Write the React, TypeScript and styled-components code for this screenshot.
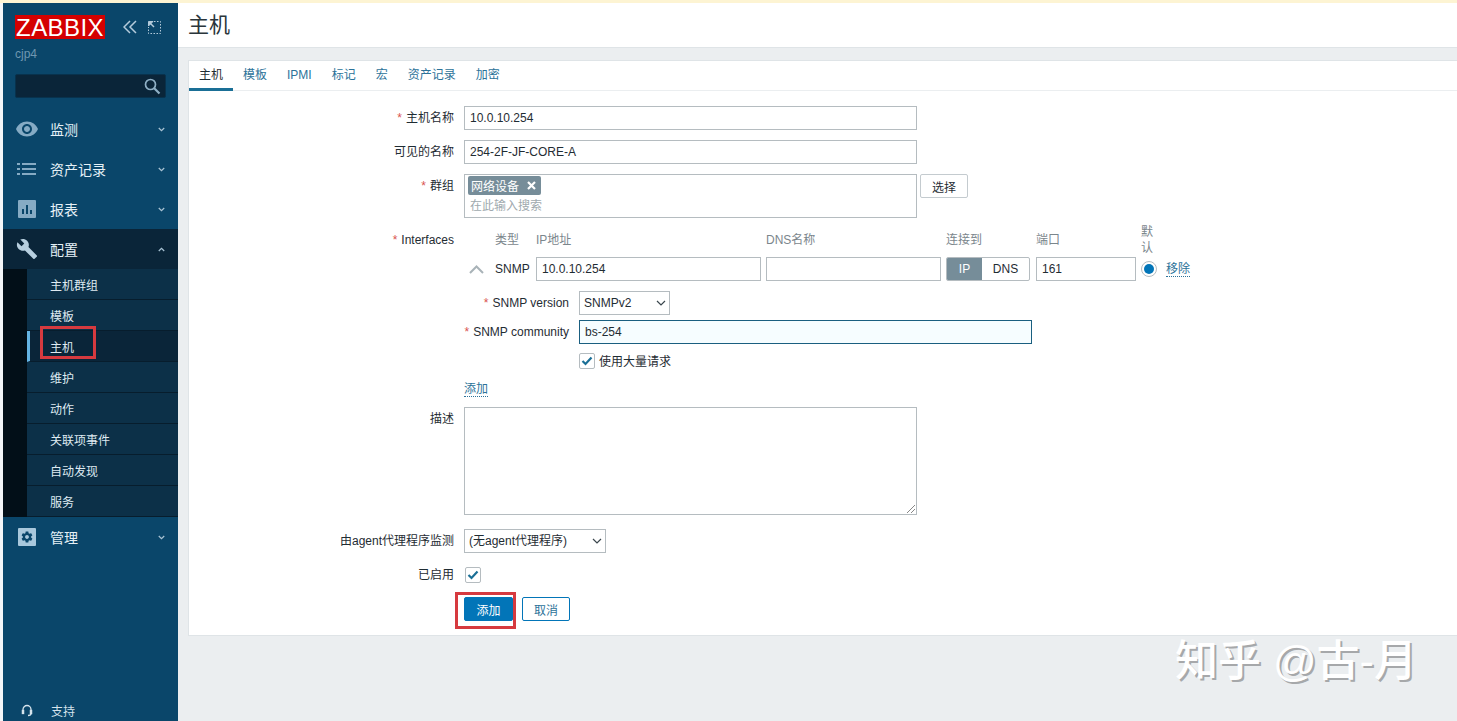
import React from 'react';
import styled, { createGlobalStyle } from 'styled-components';

const Global = createGlobalStyle`
  html, body { margin: 0; padding: 0; background: #ebeef0; }
  body { font-family: "Liberation Sans", "Noto Sans CJK SC", sans-serif; font-size: 12px; color: #1f2c33; }
  * { box-sizing: border-box; }
`;

const Page = styled.div`
  position: relative;
  width: 1457px;
  height: 721px;
  overflow: hidden;
  display: flex;
  flex-direction: column;
  background: #ebeef0;
`;
const TopStrip = styled.div`
  height: 3px;
  flex: none;
  background: #fdf4d3;
`;
const Body = styled.div`
  flex: 1;
  display: flex;
  min-height: 0;
  border-left: 3px solid #f4f6f8;
`;
const Sidebar = styled.aside`
  width: 175px;
  flex: none;
  background: #0a466a;
  display: flex;
  flex-direction: column;
`;
const Brand = styled.div`
  display: flex;
  align-items: center;
  padding: 12px 0 0 12px;
  height: 36px;
`;
const Logo = styled.div`
  width: 90px;
  height: 24px;
  background: #d40000;
  color: #fff;
  font-size: 24px;
  line-height: 25px;
  letter-spacing: 0.4px;
  text-align: center;
  white-space: nowrap;
`;
const BrandIcons = styled.div`
  display: flex;
  align-items: center;
  gap: 11px;
  margin-left: 18px;
  color: #b4cbdb;
`;
const User = styled.div`
  color: #6f97b1;
  font-size: 12px;
  line-height: 14px;
  padding: 8px 0 0 12px;
`;
const SearchBox = styled.div`
  margin: 13px 12px 0;
  height: 24px;
  background: #0a2539;
  border: 1px solid #08324d;
  border-radius: 2px;
  display: flex;
  align-items: center;
  justify-content: flex-end;
  padding-right: 4px;
  color: #8fb0c6;
`;
const Menu = styled.nav`
  margin-top: 11px;
  display: flex;
  flex-direction: column;
`;
const MenuItem = styled.div<{ $open?: boolean }>`
  height: 40px;
  display: flex;
  align-items: center;
  background: ${p => (p.$open ? '#0a2539' : 'transparent')};
  color: #e6f1f7;
  font-size: 14px;
  padding: 0 13px 0 12px;
`;
const MenuIcon = styled.span`
  width: 24px;
  height: 24px;
  display: flex;
  align-items: center;
  justify-content: center;
  color: #86abc4;
  margin-right: 11px;
`;
const MenuLabel = styled.span`
  flex: 1;
`;
const Caret = styled.span`
  display: flex;
  color: #a9c3d4;
`;
const SubMenu = styled.div`
  background: #020f18;
  padding-left: 24px;
`;
const SubItem = styled.div<{ $active?: boolean }>`
  height: 31px;
  display: flex;
  align-items: center;
  color: #dfeaf1;
  font-size: 12px;
  padding-left: ${p => (p.$active ? '20px' : '23px')};
  background: ${p => (p.$active ? '#0a2539' : '#0c3048')};
  border-bottom: 1px solid #071d2d;
  border-left: ${p => (p.$active ? '3px solid #64b4e4' : 'none')};
`;
const SidebarFooter = styled.div`
  margin-top: auto;
  height: 22px;
  display: flex;
  align-items: center;
  padding-left: 12px;
  color: #d5e3ec;
  font-size: 12px;
`;
const FooterIcon = styled.span`
  width: 24px;
  display: flex;
  justify-content: center;
  margin-right: 12px;
  color: #d5e3ec;
`;
const Main = styled.main`
  flex: 1;
  min-width: 0;
  display: flex;
  flex-direction: column;
`;
const Header = styled.header`
  height: 45px;
  flex: none;
  background: #fff;
  border-bottom: 1px solid #dfe4e7;
  padding-left: 10px;
  font-size: 21px;
  line-height: 44px;
  color: #2a353b;
`;
const Card = styled.section`
  margin: 12px 0 0 10px;
  height: 576px;
  background: #fff;
  border: 1px solid #dfe4e7;
  border-right: none;
`;
const Tabs = styled.div`
  display: flex;
  height: 30px;
  border-bottom: 1px solid #ebeef0;
`;
const Tab = styled.div<{ $active?: boolean }>`
  padding: 0 10px;
  height: 30px;
  line-height: 29px;
  color: ${p => (p.$active ? '#1f2c33' : '#2c7299')};
  border-bottom: 3px solid ${p => (p.$active ? '#1a6f96' : 'transparent')};
`;
const Form = styled.form`
  padding-top: 15px;
  display: grid;
  grid-template-columns: 265px 1fr;
  column-gap: 10px;
  row-gap: 10px;
  align-items: start;
`;
const Label = styled.label`
  text-align: right;
  line-height: 24px;
  color: #1f2c33;
  white-space: nowrap;
`;
const Star = styled.span`
  color: #d9534f;
  margin-right: 4px;
`;
const Field = styled.div<{ $w: number; $focus?: boolean }>`
  width: ${p => p.$w}px;
  height: 24px;
  line-height: 22px;
  padding: 0 5px;
  background: ${p => (p.$focus ? '#f6fdff' : '#fff')};
  border: 1px solid ${p => (p.$focus ? '#1a5f80' : '#b5bcc0')};
  color: #1f2c33;
  white-space: nowrap;
  flex: none;
`;
const Select = styled(Field)`
  display: flex;
  align-items: center;
  justify-content: space-between;
  padding: 0 3px 0 4px;
`;
const GroupLine = styled.div`
  display: flex;
  align-items: flex-start;
  gap: 3px;
`;
const GroupBox = styled.div`
  width: 453px;
  height: 44px;
  border: 1px solid #b5bcc0;
  padding: 1px 3px;
`;
const Tag = styled.span`
  display: flex;
  width: fit-content;
  align-items: center;
  gap: 8px;
  height: 19px;
  padding: 0 5px 0 3px;
  border-radius: 2px;
  background: #768d99;
  color: #fff;
`;
const Placeholder = styled.div`
  color: #a0a9ae;
  padding-left: 2px;
  line-height: 23px;
`;
const Btn = styled.button<{ $primary?: boolean; $outline?: boolean; $w: number }>`
  width: ${p => p.$w}px;
  height: 24px;
  padding: 0;
  font: inherit;
  border-radius: 2px;
  border: 1px solid ${p => (p.$primary ? '#0275b8' : p.$outline ? '#0275b8' : '#c4cbcf')};
  background: ${p => (p.$primary ? '#0275b8' : '#fff')};
  color: ${p => (p.$primary ? '#fff' : p.$outline ? '#2c7299' : '#1f2c33')};
`;
const IfaceCol = styled.div`
  display: flex;
  flex-direction: column;
  margin-top: -5px;
`;
const IfaceGrid = styled.div`
  display: grid;
  grid-template-columns: 31px 41px 230px 180px 90px 105px 25px auto;
  grid-template-rows: 34px 24px;
  align-items: center;
  justify-content: start;
`;
const HeadCell = styled.div`
  color: #7b868c;
  line-height: 16px;
`;
const NarrowHead = styled(HeadCell)`
  width: 14px;
`;
const Arrow = styled.span`
  display: flex;
  justify-content: center;
  padding-right: 7px;
  color: #a9b3b8;
`;
const Toggle = styled.div`
  width: 84px;
  height: 24px;
  display: flex;
  border: 1px solid #b5bcc0;
  border-radius: 2px;
  overflow: hidden;
`;
const ToggleOn = styled.span`
  width: 35px;
  background: #768d99;
  color: #fff;
  text-align: center;
  line-height: 22px;
`;
const ToggleOff = styled.span`
  flex: 1;
  text-align: center;
  line-height: 22px;
`;
const Radio = styled.span`
  width: 16px;
  height: 16px;
  border-radius: 50%;
  border: 1px solid #b5bcc0;
  display: flex;
  align-items: center;
  justify-content: center;
  &::after {
    content: '';
    width: 10px;
    height: 10px;
    border-radius: 50%;
    background: #0275b8;
  }
`;
const DottedLink = styled.a`
  color: #2c7299;
  border-bottom: 1px dotted #2c7299;
  line-height: 14px;
  width: fit-content;
`;
const SnmpGrid = styled.div`
  display: grid;
  grid-template-columns: 105px auto;
  column-gap: 10px;
  row-gap: 5px;
  margin-top: 10px;
  align-items: center;
  justify-content: start;
`;
const CheckRow = styled.div`
  display: flex;
  align-items: center;
  gap: 4px;
  margin-top: 3px;
`;
const Check = styled.span`
  width: 16px;
  height: 16px;
  border: 1px solid #b5bcc0;
  border-radius: 2px;
  display: flex;
  align-items: center;
  justify-content: center;
  color: #1a6f96;
  flex: none;
`;
const AddLink = styled(DottedLink)`
  margin-top: 13px;
`;
const TextArea = styled.div`
  width: 453px;
  height: 108px;
  margin-bottom: 4px;
  border: 1px solid #b5bcc0;
  position: relative;
  &::after {
    content: '';
    position: absolute;
    right: 1px;
    bottom: 1px;
    width: 8px;
    height: 8px;
    background: linear-gradient(135deg, transparent 45%, #888 45%, #888 52%, transparent 52%, transparent 70%, #888 70%, #888 77%, transparent 77%);
  }
`;
const CheckCell = styled.div`
  height: 24px;
  display: flex;
  align-items: center;
  padding-left: 1px;
`;
const Actions = styled.div`
  display: flex;
  gap: 9px;
`;
const RedFrame = styled.div<{ $x: number; $y: number; $w: number; $h: number }>`
  position: absolute;
  left: ${p => p.$x}px;
  top: ${p => p.$y}px;
  width: ${p => p.$w}px;
  height: ${p => p.$h}px;
  border: 3px solid #d63a3f;
  pointer-events: none;
`;
const Watermark = styled.div`
  position: absolute;
  left: 1175px;
  top: 635px;
  font-size: 43px;
  line-height: 52px;
  font-weight: 500;
  color: #fff;
  text-shadow: 2px 2px 0 #a6a8aa;
  white-space: nowrap;
`;

const Down = () => (
  <svg width="7" height="5" viewBox="0 0 9 6" fill="none" stroke="currentColor" strokeWidth="1.6"><path d="M1 1l3.5 3.5L8 1" /></svg>
);
const Up = () => (
  <svg width="7" height="5" viewBox="0 0 9 6" fill="none" stroke="currentColor" strokeWidth="1.6"><path d="M1 5l3.5-3.5L8 5" /></svg>
);
const SelectCaret = () => (
  <svg width="10" height="6" viewBox="0 0 10 6" fill="none" stroke="#3a464d" strokeWidth="1.2"><path d="M1 1l4 4 4-4" /></svg>
);
const Tick = () => (
  <svg width="12" height="10" viewBox="0 0 12 10" fill="none" stroke="currentColor" strokeWidth="2.2"><path d="M1.5 5l3 3 6-6.5" /></svg>
);
const Eye = () => (
  <svg width="24" height="24" viewBox="0 0 24 24" fill="currentColor"><path d="M12 4.5C7 4.5 2.73 7.61 1 12c1.73 4.39 6 7.5 11 7.5s9.27-3.11 11-7.5c-1.73-4.39-6-7.5-11-7.5zM12 17c-2.76 0-5-2.24-5-5s2.24-5 5-5 5 2.24 5 5-2.24 5-5 5zm0-8c-1.66 0-3 1.34-3 3s1.34 3 3 3 3-1.34 3-3-1.34-3-3-3z" /></svg>
);
const ListI = () => (
  <svg width="20" height="14" viewBox="0 0 20 14" fill="currentColor"><path d="M0 1h3v2H0zM5 1h14v2H5zM0 6h3v2H0zM5 6h14v2H5zM0 11h3v2H0zM5 11h14v2H5z" /></svg>
);
const Chart = () => (
  <svg width="18" height="18" viewBox="0 0 18 18"><rect width="18" height="18" rx="1" fill="currentColor" /><path d="M4 9h2v5H4zM8 5h2v9H8zM12 10h2v4h-2z" fill="#0a466a" /></svg>
);
const Wrench = () => (
  <svg width="22" height="22" viewBox="0 0 24 24" fill="#b7cfdf"><path d="M22.7 19l-9.1-9.1c.9-2.3.4-5-1.5-6.9-2-2-5-2.4-7.4-1.3L9 6 6 9 1.6 4.7C.4 7.1.9 10.1 2.9 12.1c1.9 1.9 4.6 2.4 6.9 1.5l9.1 9.1c.4.4 1 .4 1.4 0l2.3-2.3c.5-.4.5-1.1.1-1.4z" /></svg>
);
const Gear = () => (
  <svg width="18" height="18" viewBox="0 0 18 18"><rect width="18" height="18" rx="1" fill="#a9c8dc" /><g transform="translate(2.4 2.4) scale(.55)"><path fill="#0a466a" d="M19.43 12.98c.04-.32.07-.64.07-.98s-.03-.66-.07-.98l2.11-1.65c.19-.15.24-.42.12-.64l-2-3.46c-.12-.22-.39-.3-.61-.22l-2.49 1c-.52-.4-1.08-.73-1.69-.98l-.38-2.65C14.46 2.18 14.25 2 14 2h-4c-.25 0-.46.18-.49.42l-.38 2.65c-.61.25-1.17.59-1.69.98l-2.49-1c-.23-.09-.49 0-.61.22l-2 3.46c-.13.22-.07.49.12.64l2.11 1.65c-.04.32-.07.65-.07.98s.03.66.07.98l-2.11 1.65c-.19.15-.24.42-.12.64l2 3.46c.12.22.39.3.61.22l2.49-1c.52.4 1.08.73 1.69.98l.38 2.65c.03.24.24.42.49.42h4c.25 0 .46-.18.49-.42l.38-2.65c.61-.25 1.17-.59 1.69-.98l2.49 1c.23.09.49 0 .61-.22l2-3.46c.12-.22.07-.49-.12-.64l-2.11-1.65zM12 15.5c-1.93 0-3.5-1.57-3.5-3.5s1.57-3.5 3.5-3.5 3.5 1.57 3.5 3.5-1.57 3.5-3.5 3.5z" /></g></svg>
);
const Headset = () => (
  <svg width="12" height="13" viewBox="0 0 12 13" fill="none" stroke="currentColor" strokeWidth="1.3"><path d="M2 8V5.5a4 4 0 0 1 8 0V8" /><rect x="1.4" y="6.5" width="1.2" height="3" fill="currentColor" /><rect x="9.4" y="6.5" width="1.2" height="3" fill="currentColor" /><path d="M10 9.5c0 1.5-1.5 2-3 2" /></svg>
);
const Magnifier = () => (
  <svg width="18" height="18" viewBox="0 0 18 18" fill="none" stroke="currentColor" strokeWidth="1.7"><circle cx="7.5" cy="7.5" r="5" /><path d="M11 11l5.5 5.5" strokeWidth="2.2" /></svg>
);
const Collapse = () => (
  <svg width="14" height="14" viewBox="0 0 14 14" fill="none" stroke="currentColor" strokeWidth="1.5"><path d="M7 1L1 7l6 6M13 1L7 7l6 6" /></svg>
);
const Expand = () => (
  <svg width="13" height="13" viewBox="0 0 13 13" fill="none" stroke="currentColor"><path d="M6 .5h6.5V12.5H.5V6" strokeDasharray="1.5 1.5" /><path d="M1 1l5 5" strokeWidth="1.4" /><path d="M.5.5H5L.5 5z" fill="currentColor" /></svg>
);
const TagX = () => (
  <svg width="9" height="9" viewBox="0 0 9 9" stroke="#fff" strokeWidth="2.2"><path d="M1 1l7 7M8 1L1 8" /></svg>
);
const ChevronUpBig = () => (
  <svg width="15" height="9" viewBox="0 0 15 9" fill="none" stroke="currentColor" strokeWidth="2"><path d="M1 8l6.5-6.5L14 8" /></svg>
);

const tabs = ['主机', '模板', 'IPMI', '标记', '宏', '资产记录', '加密'];
const subs = ['主机群组', '模板', '主机', '维护', '动作', '关联项事件', '自动发现', '服务'];

export default function App() {
  return (
    <Page>
      <Global />
      <TopStrip />
      <Body>
        <Sidebar>
          <Brand>
            <Logo>ZABBIX</Logo>
            <BrandIcons><Collapse /><Expand /></BrandIcons>
          </Brand>
          <User>cjp4</User>
          <SearchBox><Magnifier /></SearchBox>
          <Menu>
            <MenuItem><MenuIcon><Eye /></MenuIcon><MenuLabel>监测</MenuLabel><Caret><Down /></Caret></MenuItem>
            <MenuItem><MenuIcon><ListI /></MenuIcon><MenuLabel>资产记录</MenuLabel><Caret><Down /></Caret></MenuItem>
            <MenuItem><MenuIcon><Chart /></MenuIcon><MenuLabel>报表</MenuLabel><Caret><Down /></Caret></MenuItem>
            <MenuItem $open><MenuIcon><Wrench /></MenuIcon><MenuLabel>配置</MenuLabel><Caret><Up /></Caret></MenuItem>
            <SubMenu>
              {subs.map(s => <SubItem key={s} $active={s === '主机'}>{s}</SubItem>)}
            </SubMenu>
            <MenuItem><MenuIcon><Gear /></MenuIcon><MenuLabel>管理</MenuLabel><Caret><Down /></Caret></MenuItem>
          </Menu>
          <SidebarFooter><FooterIcon><Headset /></FooterIcon>支持</SidebarFooter>
        </Sidebar>
        <Main>
          <Header>主机</Header>
          <Card>
            <Tabs>
              {tabs.map((t, i) => <Tab key={t} $active={i === 0}>{t}</Tab>)}
            </Tabs>
            <Form>
              <Label><Star>*</Star>主机名称</Label>
              <Field $w={453}>10.0.10.254</Field>
              <Label>可见的名称</Label>
              <Field $w={453}>254-2F-JF-CORE-A</Field>
              <Label><Star>*</Star>群组</Label>
              <GroupLine>
                <GroupBox>
                  <Tag>网络设备<TagX /></Tag>
                  <Placeholder>在此输入搜索</Placeholder>
                </GroupBox>
                <Btn type="button" $w={48}>选择</Btn>
              </GroupLine>
              <Label><Star>*</Star>Interfaces</Label>
              <IfaceCol>
                <IfaceGrid>
                  <span />
                  <HeadCell>类型</HeadCell>
                  <HeadCell>IP地址</HeadCell>
                  <HeadCell>DNS名称</HeadCell>
                  <HeadCell>连接到</HeadCell>
                  <HeadCell>端口</HeadCell>
                  <NarrowHead>默认</NarrowHead>
                  <span />
                  <Arrow><ChevronUpBig /></Arrow>
                  <span>SNMP</span>
                  <Field $w={225}>10.0.10.254</Field>
                  <Field $w={175}></Field>
                  <Toggle><ToggleOn>IP</ToggleOn><ToggleOff>DNS</ToggleOff></Toggle>
                  <Field $w={100}>161</Field>
                  <Radio />
                  <DottedLink>移除</DottedLink>
                </IfaceGrid>
                <SnmpGrid>
                  <Label><Star>*</Star>SNMP version</Label>
                  <Select $w={91}>SNMPv2<SelectCaret /></Select>
                  <Label><Star>*</Star>SNMP community</Label>
                  <Field $w={453} $focus>bs-254</Field>
                  <span />
                  <CheckRow><Check><Tick /></Check>使用大量请求</CheckRow>
                </SnmpGrid>
                <AddLink>添加</AddLink>
              </IfaceCol>
              <Label>描述</Label>
              <TextArea />
              <Label>由agent代理程序监测</Label>
              <Select $w={142}>(无agent代理程序)<SelectCaret /></Select>
              <Label>已启用</Label>
              <CheckCell><Check><Tick /></Check></CheckCell>
              <span />
              <Actions>
                <Btn type="button" $primary $w={49}>添加</Btn>
                <Btn type="button" $outline $w={48}>取消</Btn>
              </Actions>
            </Form>
          </Card>
        </Main>
      </Body>
      <RedFrame $x={40} $y={326} $w={56} $h={33} />
      <RedFrame $x={455} $y={592} $w={61} $h={37} />
      <Watermark>知乎 @古-月</Watermark>
    </Page>
  );
}
